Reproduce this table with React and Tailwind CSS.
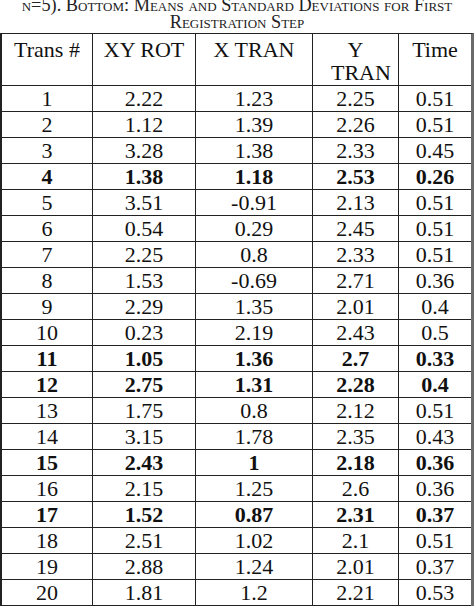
import React from "react";

const rows = [
  ["1", "2.22", "1.23", "2.25", "0.51", false],
  ["2", "1.12", "1.39", "2.26", "0.51", false],
  ["3", "3.28", "1.38", "2.33", "0.45", false],
  ["4", "1.38", "1.18", "2.53", "0.26", true],
  ["5", "3.51", "-0.91", "2.13", "0.51", false],
  ["6", "0.54", "0.29", "2.45", "0.51", false],
  ["7", "2.25", "0.8", "2.33", "0.51", false],
  ["8", "1.53", "-0.69", "2.71", "0.36", false],
  ["9", "2.29", "1.35", "2.01", "0.4", false],
  ["10", "0.23", "2.19", "2.43", "0.5", false],
  ["11", "1.05", "1.36", "2.7", "0.33", true],
  ["12", "2.75", "1.31", "2.28", "0.4", true],
  ["13", "1.75", "0.8", "2.12", "0.51", false],
  ["14", "3.15", "1.78", "2.35", "0.43", false],
  ["15", "2.43", "1", "2.18", "0.36", true],
  ["16", "2.15", "1.25", "2.6", "0.36", false],
  ["17", "1.52", "0.87", "2.31", "0.37", true],
  ["18", "2.51", "1.02", "2.1", "0.51", false],
  ["19", "2.88", "1.24", "2.01", "0.37", false],
  ["20", "1.81", "1.2", "2.21", "0.53", false],
];

const widths = ["w-[91px]", "w-[103px]", "w-[117px]", "w-[86px]", "w-[72px]"];

function Cell({ i, children, bold }) {
  const last = i === 4;
  return (
    <div
      className={`${widths[i]} shrink-0 ${last ? "" : "border-r border-[#222]"} flex items-center justify-center ${bold ? "font-bold" : "font-normal"}`}
    >
      {children}
    </div>
  );
}

export default function App() {
  const headers = ["Trans #", "XY ROT", "X TRAN", "Y TRAN", "Time"];
  return (
    <div className="w-[474px] h-[607px] overflow-hidden bg-white text-[#111] font-['Liberation_Serif','Times_New_Roman',serif]">
      <div className="h-[33px] flex flex-col overflow-hidden">
        <div className="flex flex-col items-center -mt-[3px] text-[18.3px] leading-[17px] [font-variant:small-caps] text-[#222]">
          <div className="whitespace-nowrap">n=5). Bottom: Means and Standard Deviations for First</div>
          <div className="whitespace-nowrap">Registration Step</div>
        </div>
      </div>
      <div className="border-t border-l-2 border-r-[3px] border-[#222] border-r-[#6b6b6b] text-[22px]">
        <div className="flex h-[52px] border-b border-[#222] leading-[23px]">
          {headers.map((h, i) => (
            <div
              key={i}
              className={`${widths[i]} shrink-0 ${i === 4 ? "" : "border-r border-[#222]"} text-center pt-[4px] ${i === 3 ? "px-[18px]" : ""}`}
            >
              {h}
            </div>
          ))}
        </div>
        {rows.map((r, ri) => (
          <div key={ri} className="flex h-[26px] border-b border-[#222] leading-[26px]">
            {r.slice(0, 5).map((c, i) => (
              <Cell key={i} i={i} bold={r[5]}>
                {c}
              </Cell>
            ))}
          </div>
        ))}
      </div>
    </div>
  );
}
